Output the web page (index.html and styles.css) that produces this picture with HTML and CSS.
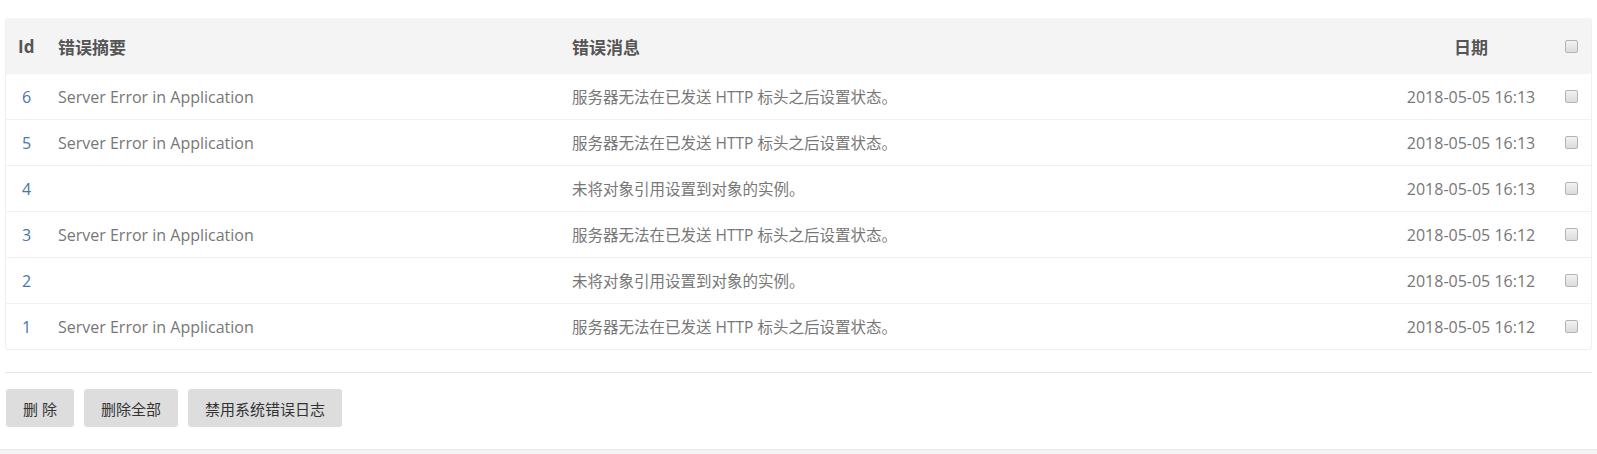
FILE: index.html
```html
<!DOCTYPE html>
<html lang="zh">
<head>
  <meta charset="UTF-8">
  <title>系统错误日志</title>
  <link rel="stylesheet" href="styles.css">
</head>
<body>
  <div class="page">
    <table class="log-table">
      <colgroup>
        <col class="col-id">
        <col class="col-summary">
        <col>
        <col class="col-date">
        <col class="col-check">
      </colgroup>
      <thead>
        <tr>
          <th class="id">Id</th>
          <th>错误摘要</th>
          <th>错误消息</th>
          <th class="date">日期</th>
          <th class="check"><span class="box"></span></th>
        </tr>
      </thead>
      <tbody>
        <tr>
          <td class="id">6</td>
          <td class="summary">Server Error in Application</td>
          <td class="msg">服务器无法在已发送 HTTP 标头之后设置状态。</td>
          <td class="date">2018-05-05 16:13</td>
          <td class="check"><span class="box"></span></td>
        </tr>
        <tr>
          <td class="id">5</td>
          <td class="summary">Server Error in Application</td>
          <td class="msg">服务器无法在已发送 HTTP 标头之后设置状态。</td>
          <td class="date">2018-05-05 16:13</td>
          <td class="check"><span class="box"></span></td>
        </tr>
        <tr>
          <td class="id">4</td>
          <td class="summary"></td>
          <td class="msg">未将对象引用设置到对象的实例。</td>
          <td class="date">2018-05-05 16:13</td>
          <td class="check"><span class="box"></span></td>
        </tr>
        <tr>
          <td class="id">3</td>
          <td class="summary">Server Error in Application</td>
          <td class="msg">服务器无法在已发送 HTTP 标头之后设置状态。</td>
          <td class="date">2018-05-05 16:12</td>
          <td class="check"><span class="box"></span></td>
        </tr>
        <tr>
          <td class="id">2</td>
          <td class="summary"></td>
          <td class="msg">未将对象引用设置到对象的实例。</td>
          <td class="date">2018-05-05 16:12</td>
          <td class="check"><span class="box"></span></td>
        </tr>
        <tr>
          <td class="id">1</td>
          <td class="summary">Server Error in Application</td>
          <td class="msg">服务器无法在已发送 HTTP 标头之后设置状态。</td>
          <td class="date">2018-05-05 16:12</td>
          <td class="check"><span class="box"></span></td>
        </tr>
      </tbody>
    </table>
    <div class="actions">
      <button class="btn">删 除</button>
      <button class="btn">删除全部</button>
      <button class="btn">禁用系统错误日志</button>
    </div>
  </div>
  <div class="footer-band"></div>
</body>
</html>
```

FILE: styles.css
```css
body {
  margin: 0;
  font-family: "Open Sans", "Noto Sans CJK SC", sans-serif;
  font-size: 16px;
  color: #777;
  background: #fff;
}
.page {
  padding: 18px 5px 0 5px;
}
.log-table {
  width: 100%;
  table-layout: fixed;
  border-collapse: separate;
  border-spacing: 0;
  border: 1px solid #f0f0f0;
  border-top: none;
  border-radius: 3px;
}
.col-id { width: 52px; }
.col-summary { width: 514px; }
.col-date { width: 160px; }
.col-check { width: 40px; }
.log-table th {
  height: 56px;
  padding: 0;
  background: #f4f4f4;
  color: #555;
  font-size: 17px;
  font-weight: 700;
  text-align: left;
}
.log-table td {
  height: 45px;
  padding: 0;
  border-top: 1px solid #f0f0f0;
  white-space: nowrap;
}
.log-table tbody tr:first-child td {
  border-top: none;
}
.log-table th.id {
  padding-left: 12px;
}
.log-table td.id {
  padding-left: 16px;
  color: #4a76a8;
}
.log-table .msg {
  font-size: 15.5px;
}
.log-table .date,
.log-table .check {
  text-align: center;
}
.box {
  display: inline-block;
  width: 11px;
  height: 11px;
  vertical-align: middle;
  border: 1px solid #b4b4b4;
  border-radius: 2px;
  background: linear-gradient(#f2f2f2, #dcdcdc);
  margin-top: -3px;
}
.actions {
  margin-top: 22px;
  padding: 16px 0 22px 1px;
  border-top: 1px solid #e6e6e6;
  display: flex;
  gap: 10px;
}
.btn {
  height: 38px;
  padding: 0 17px;
  font-family: "Open Sans", "Noto Sans CJK SC", sans-serif;
  font-size: 15px;
  color: #333;
  background: #ddd;
  border: none;
  border-radius: 3px;
}
.footer-band {
  height: 10px;
  background: #f4f4f4;
  border-top: 1px solid #e6e6e6;
}
```
